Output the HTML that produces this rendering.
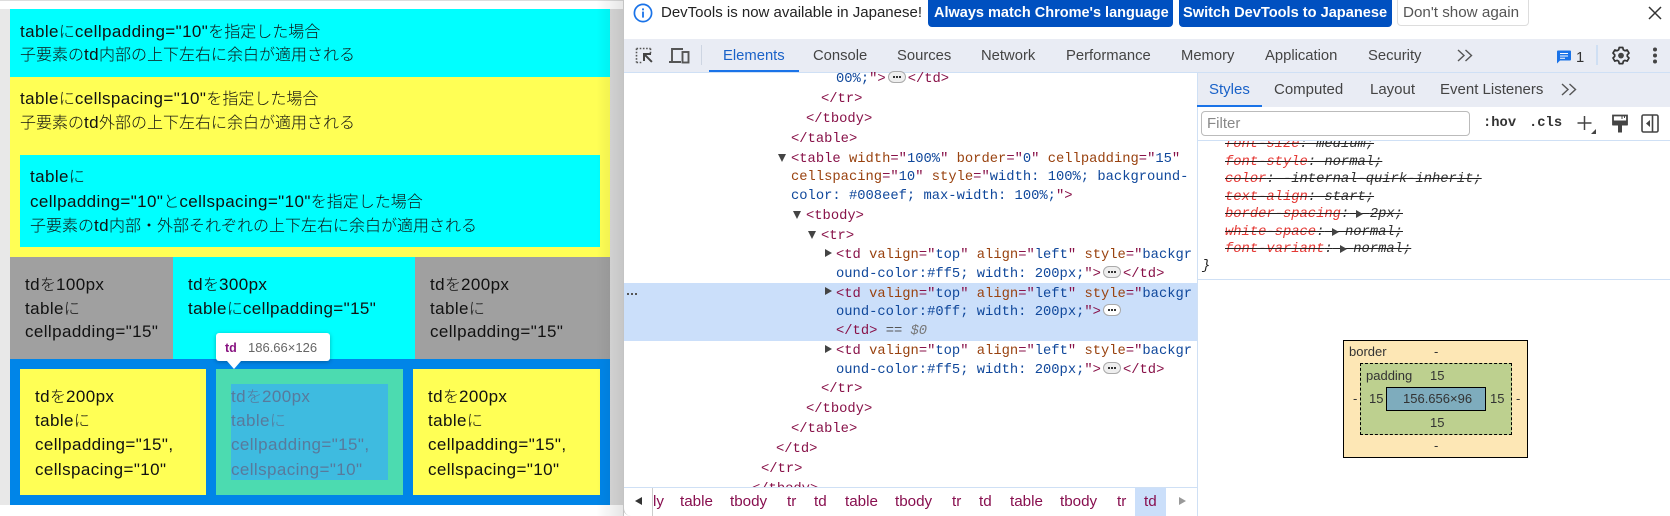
<!DOCTYPE html>
<html lang="ja"><head><meta charset="utf-8">
<style>
html,body{margin:0;padding:0;width:1670px;height:516px;overflow:hidden;background:#fff}
body{position:relative;font-family:"Liberation Sans","Noto Sans CJK JP",sans-serif}
.r{position:absolute}
.t{position:absolute;font-size:16px;line-height:24px;height:24px;white-space:pre;color:#111;font-family:"Noto Sans CJK JP",sans-serif;font-weight:300}
.t a{font-family:"Liberation Sans",sans-serif;font-size:17px;letter-spacing:.4px;font-weight:400}
.o,.o a{color:#587a9c}
.u{position:absolute;font-size:14.8px;line-height:20px;height:20px;white-space:pre;color:#444}
.m{position:absolute;font-family:"Liberation Mono",monospace;font-size:13.8px;line-height:20px;height:20px;white-space:pre;color:#881148}
.m b{font-weight:400;color:#99420f}.m i{font-style:normal;color:#0f479b}
.e{display:inline-block;width:18px;height:12px;border-radius:6px;background:#eee;border:1px solid #aaa;box-sizing:border-box;vertical-align:-1px;position:relative;margin:0 2px}
.e:after{content:"";position:absolute;left:4px;top:4px;width:2px;height:2px;background:#333;box-shadow:3px 0 #333,6px 0 #333}
.tri{position:absolute;width:0;height:0}
.dn{border-left:4.5px solid transparent;border-right:4.5px solid transparent;border-top:8px solid #444}
.rt{border-top:4.5px solid transparent;border-bottom:4.5px solid transparent;border-left:7px solid #444}
.s{position:absolute;font-family:"Liberation Mono",monospace;font-size:13.8px;font-style:italic;line-height:18px;height:18px;white-space:pre;color:#333;text-decoration:line-through;text-decoration-color:#222}
.s em{color:#e53935;font-style:italic}
.s span{letter-spacing:-1.4px}
.c{position:absolute;font-size:15.2px;line-height:20px;top:492px;color:#880f4f;white-space:pre}
.b{position:absolute;font-size:13px;line-height:14px;color:#333;white-space:pre}
</style></head><body>
<!-- page -->
<div class="r" style="left:0;top:0;width:624px;height:1px;background:#ddd"></div>
<div class="r" style="left:0;top:9px;width:10px;height:496px;background:#e8e8e8"></div>
<div class="r" style="left:610px;top:9px;width:13px;height:496px;background:#dcdcdc"></div>
<div class="r" style="left:10px;top:9px;width:600px;height:68px;background:#0ff"></div>
<div class="t" style="left:20px;top:18px"><a>table</a>に<a>cellpadding="10"</a>を指定した場合</div>
<div class="t" style="left:20px;top:41px">子要素の<a>td</a>内部の上下左右に余白が適用される</div>
<div class="r" style="left:10px;top:77px;width:600px;height:180px;background:#ffff55"></div>
<div class="t" style="left:20px;top:85px"><a>table</a>に<a>cellspacing="10"</a>を指定した場合</div>
<div class="t" style="left:20px;top:109px">子要素の<a>td</a>外部の上下左右に余白が適用される</div>
<div class="r" style="left:20px;top:155px;width:580px;height:92px;background:#0ff"></div>
<div class="t" style="left:30px;top:163px"><a>table</a>に</div>
<div class="t" style="left:30px;top:188px"><a>cellpadding="10"</a>と<a>cellspacing="10"</a>を指定した場合</div>
<div class="t" style="left:30px;top:212px">子要素の<a>td</a>内部・外部それぞれの上下左右に余白が適用される</div>

<div class="r" style="left:10px;top:257px;width:163px;height:102px;background:#a0a0a0"></div>
<div class="r" style="left:173px;top:257px;width:242px;height:102px;background:#0ff"></div>
<div class="r" style="left:415px;top:257px;width:195px;height:102px;background:#a0a0a0"></div>
<div class="t" style="left:25px;top:271px"><a>td</a>を<a>100px</a></div>
<div class="t" style="left:25px;top:295px"><a>table</a>に</div>
<div class="t" style="left:25px;top:318px"><a>cellpadding="15"</a></div>
<div class="t" style="left:188px;top:271px"><a>td</a>を<a>300px</a></div>
<div class="t" style="left:188px;top:295px"><a>table</a>に<a>cellpadding="15"</a></div>
<div class="t" style="left:430px;top:271px"><a>td</a>を<a>200px</a></div>
<div class="t" style="left:430px;top:295px"><a>table</a>に</div>
<div class="t" style="left:430px;top:318px"><a>cellpadding="15"</a></div>

<div class="r" style="left:10px;top:359px;width:600px;height:146px;background:#0085e8"></div>
<div class="r" style="left:20px;top:369px;width:186px;height:126px;background:#ffff55"></div>
<div class="r" style="left:216px;top:369px;width:187px;height:126px;background:#4cdbb0"></div>
<div class="r" style="left:231px;top:384px;width:157px;height:96px;background:#3ebbe0"></div>
<div class="r" style="left:413px;top:369px;width:187px;height:126px;background:#ffff55"></div>
<div class="t" style="left:35px;top:383px"><a>td</a>を<a>200px</a></div>
<div class="t" style="left:35px;top:407px"><a>table</a>に</div>
<div class="t" style="left:35px;top:431px"><a>cellpadding="15",</a></div>
<div class="t" style="left:35px;top:456px"><a>cellspacing="10"</a></div>
<div class="t o" style="left:231px;top:383px"><a>td</a>を<a>200px</a></div>
<div class="t o" style="left:231px;top:407px"><a>table</a>に</div>
<div class="t o" style="left:231px;top:431px"><a>cellpadding="15",</a></div>
<div class="t o" style="left:231px;top:456px"><a>cellspacing="10"</a></div>
<div class="t" style="left:428px;top:383px"><a>td</a>を<a>200px</a></div>
<div class="t" style="left:428px;top:407px"><a>table</a>に</div>
<div class="t" style="left:428px;top:431px"><a>cellpadding="15",</a></div>
<div class="t" style="left:428px;top:456px"><a>cellspacing="10"</a></div>

<div class="r" style="left:216px;top:333px;width:114px;height:28px;background:#fff;border-radius:3px;box-shadow:0 1px 4px rgba(0,0,0,.3)"></div>
<div class="tri" style="left:227px;top:361px;border-left:7px solid transparent;border-right:7px solid transparent;border-top:8px solid #fff"></div>
<div class="r" style="left:225px;top:341px;font-size:12.5px;line-height:14px;font-weight:700;color:#881280">td</div>
<div class="r" style="left:248px;top:341px;font-size:13px;line-height:14px;color:#666">186.66×126</div>
<div class="r" style="left:596px;top:0;width:28px;height:516px;background:linear-gradient(to right,rgba(0,0,0,0),rgba(0,0,0,.1))"></div>

<!-- devtools -->
<div class="r" style="left:623px;top:0;width:1px;height:516px;background:#c4c4c4"></div>
<svg class="r" style="left:633px;top:3px" width="20" height="20" viewBox="0 0 20 20"><circle cx="10" cy="10" r="8.6" fill="none" stroke="#1a73e8" stroke-width="1.7"/><rect x="9.1" y="8.6" width="1.8" height="6" fill="#1a73e8"/><rect x="9.1" y="5.4" width="1.8" height="1.9" fill="#1a73e8"/></svg>
<div class="u" style="left:661px;top:3px;color:#222;font-size:15px">DevTools is now available in Japanese!</div>
<div class="r" style="left:928px;top:0;width:245px;height:27px;background:#0050c0;border-radius:0 0 4px 4px"></div>
<div class="u" style="left:934px;top:3px;color:#fff;font-weight:700;font-size:14.5px">Always match Chrome's language</div>
<div class="r" style="left:1179px;top:0;width:213px;height:27px;background:#0050c0;border-radius:0 0 4px 4px"></div>
<div class="u" style="left:1183px;top:3px;color:#fff;font-weight:700;font-size:14.6px">Switch DevTools to Japanese</div>
<div class="r" style="left:1397px;top:-1px;width:132px;height:27px;background:#fff;border:1px solid #ddd;border-radius:0 0 4px 4px;box-sizing:border-box"></div>
<div class="u" style="left:1403px;top:3px;color:#555;font-size:15.2px">Don't show again</div>
<svg class="r" style="left:1648px;top:6px" width="14" height="14" viewBox="0 0 14 14"><path d="M1 1L13 13M13 1L1 13" stroke="#333" stroke-width="1.5" fill="none"/></svg>

<div class="r" style="left:624px;top:39px;width:1046px;height:33px;background:#e9ecf4"></div>
<div class="r" style="left:624px;top:72px;width:1046px;height:1px;background:#cfe0f5"></div>
<svg class="r" style="left:635px;top:46px" width="20" height="20" viewBox="0 0 20 20"><path d="M1.5 2.5h14M1.5 2.5v14M1.5 16.5h5M15.5 2.5v5" stroke="#555" stroke-width="1.6" stroke-dasharray="1.6 1.6" fill="none"/><path d="M8 7h8v2h-4.6l6.2 6.2-1.4 1.4L10 10.4V15H8z" fill="#444"/></svg>
<svg class="r" style="left:668px;top:46px" width="24" height="20" viewBox="0 0 24 20"><path d="M4 15V3h11M1 16h12" stroke="#555" stroke-width="1.9" fill="none"/><rect x="14.5" y="6" width="6" height="10.5" fill="none" stroke="#555" stroke-width="1.9"/></svg>
<div class="r" style="left:701px;top:45px;width:1px;height:20px;background:#cdd5e2"></div>
<div class="u" style="left:723px;top:46px;color:#1a62c8">Elements</div>
<div class="r" style="left:709px;top:70px;width:90px;height:2px;background:#1a73e8"></div>
<div class="u" style="left:813px;top:46px">Console</div>
<div class="u" style="left:897px;top:46px">Sources</div>
<div class="u" style="left:981px;top:46px">Network</div>
<div class="u" style="left:1066px;top:46px">Performance</div>
<div class="u" style="left:1181px;top:46px">Memory</div>
<div class="u" style="left:1265px;top:46px">Application</div>
<div class="u" style="left:1368px;top:46px">Security</div>
<svg class="r" style="left:1457px;top:49px" width="16" height="13" viewBox="0 0 16 13"><path d="M1 1l6 5.5L1 12M8.5 1l6 5.5-6 5.5" stroke="#555" stroke-width="1.4" fill="none"/></svg>
<svg class="r" style="left:1557px;top:50px" width="14" height="14" viewBox="0 0 14 14"><path d="M0 1.5Q0 .5 1 .5h12q1 0 1 1v8q0 1-1 1H3l-3 3z" fill="#1a73e8"/><path d="M3 3.5h8M3 6h8M3 8.3h5" stroke="#fff" stroke-width="1"/></svg>
<div class="u" style="left:1576px;top:48px;color:#333">1</div>
<div class="r" style="left:1596px;top:45px;width:2px;height:20px;background:#cfdff3"></div>
<svg class="r" style="left:1611px;top:46px" width="20" height="20" viewBox="0 0 20 20"><path d="M8.2 1.5h3.6l.5 2.3 1.6.9 2.3-.7 1.8 3.1-1.7 1.6v1.7l1.7 1.6-1.8 3.1-2.3-.7-1.6.9-.5 2.3H8.2l-.5-2.3-1.6-.9-2.3.7-1.8-3.1 1.7-1.6V8.7L2 7.1l1.8-3.1 2.3.7 1.6-.9z" fill="none" stroke="#333" stroke-width="1.7" stroke-linejoin="round"/><circle cx="10" cy="9.6" r="2.9" fill="#444"/></svg>
<svg class="r" style="left:1652px;top:47px" width="6" height="17" viewBox="0 0 6 17"><circle cx="3" cy="2.5" r="2" fill="#444"/><circle cx="3" cy="8.5" r="2" fill="#444"/><circle cx="3" cy="14.5" r="2" fill="#444"/></svg>

<!-- DOM tree -->
<div class="r" style="left:624px;top:283px;width:573px;height:58px;background:#cbdffa"></div>
<div class="m" style="left:836px;top:70px"><i>00%;</i>"&gt;<span class="e"></span>&lt;/td&gt;</div>
<div class="m" style="left:821px;top:90px">&lt;/tr&gt;</div>
<div class="m" style="left:806px;top:110px">&lt;/tbody&gt;</div>
<div class="m" style="left:791px;top:130px">&lt;/table&gt;</div>
<div class="tri dn" style="left:778px;top:154px"></div>
<div class="m" style="left:791px;top:150px">&lt;table <b>width</b>="<i>100%</i>" <b>border</b>="<i>0</i>" <b>cellpadding</b>="<i>15</i>"</div>
<div class="m" style="left:791px;top:168px"><b>cellspacing</b>="<i>10</i>" <b>style</b>="<i>width: 100%; background-</i></div>
<div class="m" style="left:791px;top:187px"><i>color: #008eef; max-width: 100%;</i>"&gt;</div>
<div class="tri dn" style="left:793px;top:211px"></div>
<div class="m" style="left:806px;top:207px">&lt;tbody&gt;</div>
<div class="tri dn" style="left:808px;top:231px"></div>
<div class="m" style="left:821px;top:227px">&lt;tr&gt;</div>
<div class="tri rt" style="left:825px;top:249px"></div>
<div class="m" style="left:836px;top:246px">&lt;td <b>valign</b>="<i>top</i>" <b>align</b>="<i>left</i>" <b>style</b>="<i>backgr</i></div>
<div class="m" style="left:836px;top:265px"><i>ound-color:#ff5; width: 200px;</i>"&gt;<span class="e"></span>&lt;/td&gt;</div>
<div class="r" style="left:627px;top:293px;width:2px;height:2px;background:#555;box-shadow:4px 0 #555,8px 0 #555"></div>
<div class="tri rt" style="left:825px;top:287px"></div>
<div class="m" style="left:836px;top:285px">&lt;td <b>valign</b>="<i>top</i>" <b>align</b>="<i>left</i>" <b>style</b>="<i>backgr</i></div>
<div class="m" style="left:836px;top:303px"><i>ound-color:#0ff; width: 200px;</i>"&gt;<span class="e" style="background:#fff"></span></div>
<div class="m" style="left:836px;top:322px">&lt;/td&gt; <span style="color:#555">==</span> <span style="color:#777;font-style:italic">$0</span></div>
<div class="tri rt" style="left:825px;top:345px"></div>
<div class="m" style="left:836px;top:342px">&lt;td <b>valign</b>="<i>top</i>" <b>align</b>="<i>left</i>" <b>style</b>="<i>backgr</i></div>
<div class="m" style="left:836px;top:361px"><i>ound-color:#ff5; width: 200px;</i>"&gt;<span class="e"></span>&lt;/td&gt;</div>
<div class="m" style="left:821px;top:380px">&lt;/tr&gt;</div>
<div class="m" style="left:806px;top:400px">&lt;/tbody&gt;</div>
<div class="m" style="left:791px;top:420px">&lt;/table&gt;</div>
<div class="m" style="left:776px;top:440px">&lt;/td&gt;</div>
<div class="m" style="left:761px;top:460px">&lt;/tr&gt;</div>
<div class="m" style="left:752px;top:480px">&lt;/tbody&gt;</div>

<!-- breadcrumbs -->
<div class="r" style="left:624px;top:487px;width:573px;height:29px;background:#fff;border-top:1px solid #cfe0f5;box-sizing:border-box"></div>
<div class="r" style="left:623px;top:488px;width:30px;height:28px;border-right:1px solid #ccc;border-left:1px solid #c4c4c4;border-bottom-left-radius:8px;box-sizing:border-box;background:#fff;z-index:2"></div>
<div class="tri" style="left:635px;top:497px;z-index:3;border-top:4.5px solid transparent;border-bottom:4.5px solid transparent;border-right:7px solid #333"></div>
<div class="c" style="left:653px">ly</div>
<div class="c" style="left:680px">table</div>
<div class="c" style="left:730px">tbody</div>
<div class="c" style="left:787px">tr</div>
<div class="c" style="left:814px">td</div>
<div class="c" style="left:845px">table</div>
<div class="c" style="left:895px">tbody</div>
<div class="c" style="left:952px">tr</div>
<div class="c" style="left:979px">td</div>
<div class="c" style="left:1010px">table</div>
<div class="c" style="left:1060px">tbody</div>
<div class="c" style="left:1117px">tr</div>
<div class="r" style="left:1135px;top:488px;width:31px;height:28px;background:#cbdffa"></div>
<div class="c" style="left:1144px">td</div>
<div class="tri" style="left:1179px;top:497px;border-top:4.5px solid transparent;border-bottom:4.5px solid transparent;border-left:7px solid #999"></div>

<!-- sidebar -->
<div class="r" style="left:1197px;top:73px;width:473px;height:443px;background:#fff;border-left:1px solid #cfe0f5;box-sizing:border-box"></div>
<div class="r" style="left:1198px;top:73px;width:472px;height:34px;background:#e9ecf4"></div>
<div class="r" style="left:1197px;top:105px;width:65px;height:2px;background:#1a73e8"></div>
<div class="u" style="left:1209px;top:80px;color:#1a62c8;font-size:15px">Styles</div>
<div class="u" style="left:1274px;top:80px;font-size:15px">Computed</div>
<div class="u" style="left:1370px;top:80px;font-size:15px">Layout</div>
<div class="u" style="left:1440px;top:80px;font-size:15px">Event Listeners</div>
<svg class="r" style="left:1561px;top:83px" width="16" height="13" viewBox="0 0 16 13"><path d="M1 1l6 5.5L1 12M8.5 1l6 5.5-6 5.5" stroke="#555" stroke-width="1.4" fill="none"/></svg>
<div class="r" style="left:1201px;top:111px;width:269px;height:25px;border:1px solid #bbb;border-radius:4px;box-sizing:border-box;background:#fff"></div>
<div class="u" style="left:1207px;top:114px;color:#888;font-size:15px">Filter</div>
<div class="m" style="left:1483px;top:114px;color:#333;font-weight:700">:hov</div>
<div class="m" style="left:1529px;top:114px;color:#333;font-weight:700">.cls</div>
<svg class="r" style="left:1576px;top:114px" width="22" height="22" viewBox="0 0 22 22"><path d="M8.5 2v14M1.5 9h14" stroke="#444" stroke-width="1.5" fill="none"/><path d="M20 15v5h-5z" fill="#444"/></svg>
<svg class="r" style="left:1611px;top:114px" width="18" height="20" viewBox="0 0 18 20"><path d="M2 1.5h14v9H2z" fill="none" stroke="#444" stroke-width="1.8"/><path d="M2 6.5h14v5H11v7H7v-7H2z" fill="#444"/><path d="M11 2v3M13.5 2v2" stroke="#444" stroke-width="1"/></svg>
<svg class="r" style="left:1641px;top:114px" width="18" height="19" viewBox="0 0 18 19"><rect x="1" y="1" width="16" height="17" rx="1.5" fill="none" stroke="#444" stroke-width="1.6"/><path d="M11.5 1v17" stroke="#444" stroke-width="1.6"/><path d="M9 6v7L5 9.5z" fill="#444"/></svg>
<div class="r" style="left:1198px;top:140px;width:472px;height:1px;background:#cfe0f5;z-index:3"></div>
<div class="r" style="left:1198px;top:141px;width:472px;height:137px;overflow:hidden">
<div class="s" style="left:27px;top:-5px"><em>font-size</em>: medium;</div>
<div class="s" style="left:27px;top:13px"><em>font-style</em>: normal;</div>
<div class="s" style="left:27px;top:30px"><em>color</em>: -internal-quirk-inherit;</div>
<div class="s" style="left:27px;top:48px"><em>text-align</em>: start;</div>
<div class="s" style="left:27px;top:65px"><em>border-spacing</em>:<span>   </span>2px;</div>
<div class="s" style="left:27px;top:83px"><em>white-space</em>:<span>   </span>normal;</div>
<div class="s" style="left:27px;top:100px"><em>font-variant</em>:<span>   </span>normal;</div>
<div class="tri rt" style="left:158px;top:69px"></div>
<div class="tri rt" style="left:134px;top:87px"></div>
<div class="tri rt" style="left:142px;top:104px"></div>
<div class="s" style="left:4px;top:117px;text-decoration:none;color:#222">}</div>
</div>
<div class="r" style="left:1198px;top:279px;width:472px;height:1px;background:#cfe0f5"></div>

<!-- box model -->
<div class="r" style="left:1343px;top:340px;width:185px;height:118px;background:#fde7b5;border:1px solid #000;box-sizing:border-box"></div>
<div class="r" style="left:1360px;top:363px;width:152px;height:72px;background:#bdd08f;border:1px dashed #000;box-sizing:border-box"></div>
<div class="r" style="left:1386px;top:387px;width:100px;height:24px;background:#7eacbd;border:1px solid #000;box-sizing:border-box"></div>
<div class="b" style="left:1349px;top:345px">border</div>
<div class="b" style="left:1434px;top:345px">-</div>
<div class="b" style="left:1366px;top:369px">padding</div>
<div class="b" style="left:1430px;top:369px">15</div>
<div class="b" style="left:1353px;top:392px">-</div>
<div class="b" style="left:1369px;top:392px">15</div>
<div class="b" style="left:1403px;top:392px">156.656×96</div>
<div class="b" style="left:1490px;top:392px">15</div>
<div class="b" style="left:1516px;top:392px">-</div>
<div class="b" style="left:1430px;top:416px">15</div>
<div class="b" style="left:1434px;top:439px">-</div>
</body></html>
